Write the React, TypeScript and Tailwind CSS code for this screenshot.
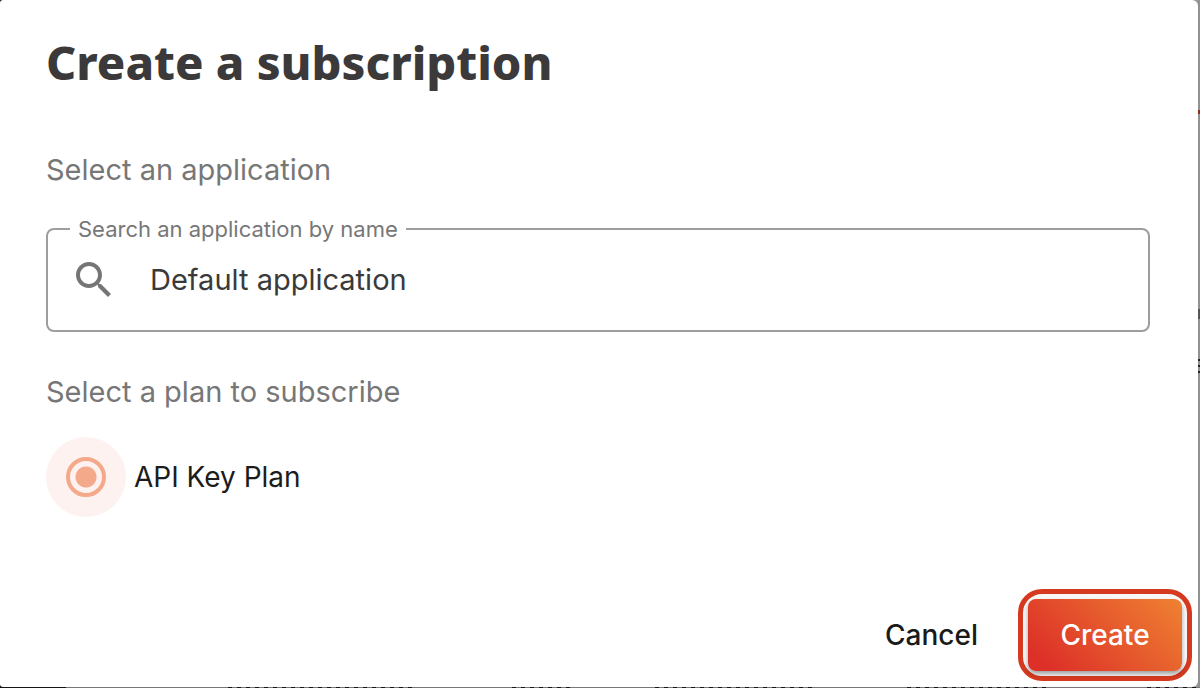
import { useState } from "react";

const backdropText = [
  "ml-[162px] w-[184px]",
  "ml-[100px] w-[58px]",
  "ml-[85px] w-[157px]",
  "ml-[95px] w-[143px]",
  "ml-[97px] w-[53px]",
];

function SearchIcon() {
  return (
    <svg viewBox="0 0 24 24" className="size-12 shrink-0 fill-[#757575]" aria-hidden="true">
      <path d="M15.5 14h-.79l-.28-.27C15.41 12.59 16 11.11 16 9.5 16 5.91 13.09 3 9.5 3S3 5.91 3 9.5 5.91 16 9.5 16c1.61 0 3.09-.59 4.23-1.57l.27.28v.79l5 4.99L20.49 19l-4.99-5zm-6 0C7.01 14 5 11.99 5 9.5S7.01 5 9.5 5 14 7.01 14 9.5 11.99 14 9.5 14z" />
    </svg>
  );
}

export default function App() {
  const [application, setApplication] = useState("Default application");

  return (
    <div className="flex min-h-screen flex-col bg-[linear-gradient(to_right,#151317_66px,#9a9a9a_66px)] font-['Inter','Noto_Sans',sans-serif]">
      <div className="flex flex-1">
        <main
          role="dialog"
          aria-labelledby="dialog-title"
          className="flex min-w-0 flex-1 flex-col rounded-l-[3px] rounded-r-md bg-white"
        >
          <form className="flex flex-1 flex-col" onSubmit={(event) => event.preventDefault()}>
            <div className="flex-1 px-[46px] pt-8">
              <h1
                id="dialog-title"
                className="font-['Noto_Sans','Open_Sans',sans-serif] text-[47px] leading-[60px] font-extrabold text-[#3c393a]"
              >
                Create a subscription
              </h1>

              <h2 className="mt-[58px] text-[29px] leading-10 text-[#777777]">
                Select an application
              </h2>

              <fieldset className="mt-[27px] mr-0.5 rounded-lg border-2 border-[#9e9e9e] pr-6 pb-[26px] pl-[22px]">
                <legend className="px-2 text-[22px] leading-6 text-[#777777]">
                  <label htmlFor="application">Search an application by name</label>
                </legend>
                <div className="flex items-center gap-8 pt-[15px]">
                  <SearchIcon />
                  <input
                    id="application"
                    type="text"
                    value={application}
                    onChange={(event) => setApplication(event.target.value)}
                    className="h-10 min-w-0 flex-1 bg-transparent text-[29px] text-[#3a3a3a] outline-none"
                  />
                </div>
              </fieldset>

              <h2 className="mt-10 text-[29px] leading-10 text-[#777777]">
                Select a plan to subscribe
              </h2>

              <div className="mt-[25px] flex items-center gap-2">
                <span className="flex size-20 items-center justify-center rounded-full bg-[#fdf2f0]">
                  <input
                    id="api-key-plan"
                    type="radio"
                    name="plan"
                    defaultChecked
                    className="size-10 appearance-none rounded-full border-4 border-[#f4a98a] bg-[radial-gradient(circle,#f4a98a_10px,transparent_11px)] outline-none"
                  />
                </span>
                <label htmlFor="api-key-plan" className="text-[28px] leading-10 text-[#1c1c1c]">
                  API Key Plan
                </label>
              </div>
            </div>

            <div className="flex items-center justify-end gap-2 pr-1.5 pb-1.5">
              <button type="button" className="h-[72px] px-8 text-[28px] font-medium text-[#1a1a1a]">
                Cancel
              </button>
              <span className="rounded-3xl border-[5px] border-[#d53a20] bg-[#f7f7f7] p-[5px]">
                <button
                  type="submit"
                  className="block h-[72px] w-[154px] rounded-lg bg-[linear-gradient(45deg,#dc3028_10%,#ef8231)] text-[28px] font-medium text-white shadow-[0_3px_4px_rgba(0,0,0,0.35)]"
                >
                  Create
                </button>
              </span>
            </div>
          </form>
        </main>

        <div className="flex w-0.5 flex-col bg-[#919191]" aria-hidden="true">
          <span className="mt-[110px] h-1 bg-[#8f2d1e]" />
          <span className="mt-[195px] h-2.5 bg-[#555555]" />
          <span className="mt-10 h-0.5 bg-[#222222]" />
          <span className="mt-1 h-0.5 bg-[#222222]" />
          <span className="mt-1 h-0.5 bg-[#222222]" />
        </div>
      </div>

      <div className="flex h-px overflow-hidden" aria-hidden="true">
        <span className="w-[66px] shrink-0 bg-[#151317]" />
        <div className="flex flex-1 bg-[#777777]">
          {backdropText.map((size) => (
            <span
              key={size}
              className={`${size} shrink-0 bg-[repeating-linear-gradient(to_right,#171517_0px,#171517_4px,#777777_4px,#777777_9px)]`}
            />
          ))}
        </div>
      </div>
    </div>
  );
}
